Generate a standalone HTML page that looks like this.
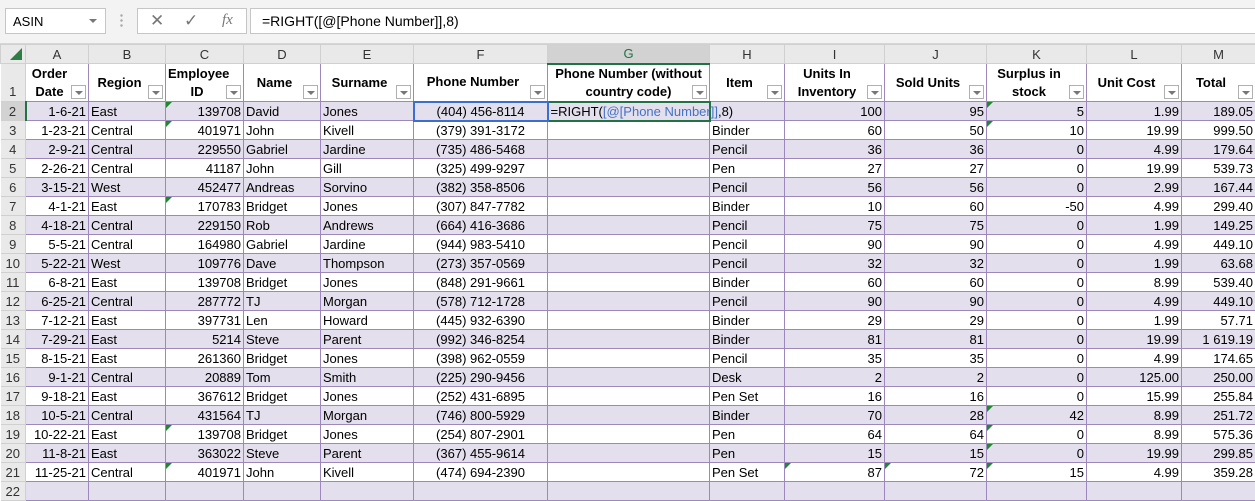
<!DOCTYPE html>
<html><head><meta charset="utf-8">
<style>
*{box-sizing:border-box;margin:0;padding:0}
body{width:1255px;height:484px;overflow:hidden;background:#fff;font-family:"Liberation Sans",sans-serif;font-size:13px;color:#000;position:relative}
#bar{position:absolute;left:0;top:0;width:1255px;height:44px;background:#f3f3f3;border-bottom:1px solid #d6d6d6}
#nb{position:absolute;left:5px;top:8px;width:101px;height:26px;background:#fff;border:1px solid #c6c6c6;font-size:13px;padding:5px 0 0 7px}
#nb:after{content:"";position:absolute;right:8px;top:10px;border-left:4px solid transparent;border-right:4px solid transparent;border-top:4px solid #777}
#dots{position:absolute;left:120px;top:13px;width:3px;height:16px;background:radial-gradient(circle,#aaa 1px,transparent 1.5px) 0 0/3px 5px}
#fb{position:absolute;left:137px;top:8px;width:110px;height:26px;background:#fff;border:1px solid #c6c6c6;color:#777}
#fi{position:absolute;left:250px;top:8px;width:1010px;height:26px;background:#fff;border:1px solid #c6c6c6;padding:4px 0 0 11px;font-size:14px}
table{position:absolute;left:0;top:44px;width:1255px;border-collapse:collapse;table-layout:fixed}
td{height:19px;border:1px solid #9c88bd;padding:0 2px;white-space:nowrap;overflow:hidden;font-weight:normal;line-height:17px}
tr.ch td{background:#e9e9e9;border-color:#d0d0d0;text-align:center;color:#333;font-size:13px}
td.rh{background:#e9e9e9;border-color:#d0d0d0;text-align:center;color:#333;border-left:none;padding:0}
tr.h td{height:38px;font-weight:bold;text-align:center;position:relative;line-height:18px;padding:0 17px 0 2px;vertical-align:middle;white-space:normal;overflow:visible}
tr.h td.rh{font-weight:normal;vertical-align:bottom;padding:0}
.f{position:absolute;right:2px;bottom:2px;width:15px;height:14px;border:1px solid #b0b0b0;background:#fff}
.f:after{content:"";position:absolute;left:3px;top:5px;border-left:4px solid transparent;border-right:4px solid transparent;border-top:4px solid #777}
tr.b td{background:#e4dfec}
tr.b td.rh,tr td.rh{background:#e9e9e9}
.r{text-align:right}.c{text-align:center}
.t{position:relative}
.t:before{content:"";position:absolute;left:0;top:0;border-top:6px solid #1e8a2e;border-right:6px solid transparent}
</style></head><body>
<div id="bar">
<div id="nb">ASIN</div>
<div id="dots"></div>
<div id="fb"><span style="position:absolute;left:12px;top:2px;font-size:17px">✕</span><span style="position:absolute;left:46px;top:2px;font-size:17px">✓</span><span style="position:absolute;left:84px;top:3px;font-style:italic;font-family:'Liberation Serif',serif;font-size:15px">fx</span></div>
<div id="fi">=RIGHT([@[Phone Number]],8)</div>
</div>
<table>
<colgroup><col style="width:25px"><col style="width:63px"><col style="width:77px"><col style="width:78px"><col style="width:77px"><col style="width:93px"><col style="width:134px"><col style="width:162px"><col style="width:75px"><col style="width:100px"><col style="width:102px"><col style="width:100px"><col style="width:95px"><col style="width:74px"></colgroup>
<tr class="ch"><td style="background:#e9e9e9;position:relative"><span style="position:absolute;right:3px;bottom:3px;border-left:12px solid transparent;border-bottom:12px solid #2e7d44"></span></td><td>A</td><td>B</td><td>C</td><td>D</td><td>E</td><td>F</td><td style="background:#d2d2d2;color:#217346;border-bottom:2px solid #217346">G</td><td>H</td><td>I</td><td>J</td><td>K</td><td>L</td><td>M</td></tr>
<tr class="h"><td class="rh">1</td><td>Order Date<span class="f"></span></td><td>Region<span class="f"></span></td><td>Employee ID<span class="f"></span></td><td>Name<span class="f"></span></td><td>Surname<span class="f"></span></td><td>Phone Number<span class="f"></span></td><td style="padding:0 2px">Phone Number (without<br>country code)<span class="f"></span></td><td>Item<span class="f"></span></td><td>Units In Inventory<span class="f"></span></td><td>Sold Units<span class="f"></span></td><td>Surplus in stock<span class="f"></span></td><td>Unit Cost<span class="f"></span></td><td>Total<span class="f"></span></td></tr>
<tr class="b"><td class="rh" style="background:#d2d2d2;border-right:2px solid #217346">2</td><td class="r">1-6-21</td><td>East</td><td class="r t">139708</td><td>David</td><td>Jones</td><td class="c" style="border:2px solid #3a6fcf">(404) 456-8114</td><td style="border:2px solid #217346;overflow:visible;position:relative;z-index:2">=RIGHT(<span style="color:#4472c4">[@[Phone Number]]</span>,8)</td><td></td><td class="r">100</td><td class="r">95</td><td class="r t">5</td><td class="r">1.99</td><td class="r">189.05</td></tr>
<tr><td class="rh">3</td><td class="r">1-23-21</td><td>Central</td><td class="r t">401971</td><td>John</td><td>Kivell</td><td class="c">(379) 391-3172</td><td></td><td>Binder</td><td class="r">60</td><td class="r">50</td><td class="r t">10</td><td class="r">19.99</td><td class="r">999.50</td></tr>
<tr class="b"><td class="rh">4</td><td class="r">2-9-21</td><td>Central</td><td class="r">229550</td><td>Gabriel</td><td>Jardine</td><td class="c">(735) 486-5468</td><td></td><td>Pencil</td><td class="r">36</td><td class="r">36</td><td class="r">0</td><td class="r">4.99</td><td class="r">179.64</td></tr>
<tr><td class="rh">5</td><td class="r">2-26-21</td><td>Central</td><td class="r">41187</td><td>John</td><td>Gill</td><td class="c">(325) 499-9297</td><td></td><td>Pen</td><td class="r">27</td><td class="r">27</td><td class="r">0</td><td class="r">19.99</td><td class="r">539.73</td></tr>
<tr class="b"><td class="rh">6</td><td class="r">3-15-21</td><td>West</td><td class="r">452477</td><td>Andreas</td><td>Sorvino</td><td class="c">(382) 358-8506</td><td></td><td>Pencil</td><td class="r">56</td><td class="r">56</td><td class="r">0</td><td class="r">2.99</td><td class="r">167.44</td></tr>
<tr><td class="rh">7</td><td class="r">4-1-21</td><td>East</td><td class="r t">170783</td><td>Bridget</td><td>Jones</td><td class="c">(307) 847-7782</td><td></td><td>Binder</td><td class="r">10</td><td class="r">60</td><td class="r">-50</td><td class="r">4.99</td><td class="r">299.40</td></tr>
<tr class="b"><td class="rh">8</td><td class="r">4-18-21</td><td>Central</td><td class="r">229150</td><td>Rob</td><td>Andrews</td><td class="c">(664) 416-3686</td><td></td><td>Pencil</td><td class="r">75</td><td class="r">75</td><td class="r">0</td><td class="r">1.99</td><td class="r">149.25</td></tr>
<tr><td class="rh">9</td><td class="r">5-5-21</td><td>Central</td><td class="r">164980</td><td>Gabriel</td><td>Jardine</td><td class="c">(944) 983-5410</td><td></td><td>Pencil</td><td class="r">90</td><td class="r">90</td><td class="r">0</td><td class="r">4.99</td><td class="r">449.10</td></tr>
<tr class="b"><td class="rh">10</td><td class="r">5-22-21</td><td>West</td><td class="r">109776</td><td>Dave</td><td>Thompson</td><td class="c">(273) 357-0569</td><td></td><td>Pencil</td><td class="r">32</td><td class="r">32</td><td class="r">0</td><td class="r">1.99</td><td class="r">63.68</td></tr>
<tr><td class="rh">11</td><td class="r">6-8-21</td><td>East</td><td class="r">139708</td><td>Bridget</td><td>Jones</td><td class="c">(848) 291-9661</td><td></td><td>Binder</td><td class="r">60</td><td class="r">60</td><td class="r">0</td><td class="r">8.99</td><td class="r">539.40</td></tr>
<tr class="b"><td class="rh">12</td><td class="r">6-25-21</td><td>Central</td><td class="r">287772</td><td>TJ</td><td>Morgan</td><td class="c">(578) 712-1728</td><td></td><td>Pencil</td><td class="r">90</td><td class="r">90</td><td class="r">0</td><td class="r">4.99</td><td class="r">449.10</td></tr>
<tr><td class="rh">13</td><td class="r">7-12-21</td><td>East</td><td class="r">397731</td><td>Len</td><td>Howard</td><td class="c">(445) 932-6390</td><td></td><td>Binder</td><td class="r">29</td><td class="r">29</td><td class="r">0</td><td class="r">1.99</td><td class="r">57.71</td></tr>
<tr class="b"><td class="rh">14</td><td class="r">7-29-21</td><td>East</td><td class="r">5214</td><td>Steve</td><td>Parent</td><td class="c">(992) 346-8254</td><td></td><td>Binder</td><td class="r">81</td><td class="r">81</td><td class="r">0</td><td class="r">19.99</td><td class="r">1 619.19</td></tr>
<tr><td class="rh">15</td><td class="r">8-15-21</td><td>East</td><td class="r">261360</td><td>Bridget</td><td>Jones</td><td class="c">(398) 962-0559</td><td></td><td>Pencil</td><td class="r">35</td><td class="r">35</td><td class="r">0</td><td class="r">4.99</td><td class="r">174.65</td></tr>
<tr class="b"><td class="rh">16</td><td class="r">9-1-21</td><td>Central</td><td class="r">20889</td><td>Tom</td><td>Smith</td><td class="c">(225) 290-9456</td><td></td><td>Desk</td><td class="r">2</td><td class="r">2</td><td class="r">0</td><td class="r">125.00</td><td class="r">250.00</td></tr>
<tr><td class="rh">17</td><td class="r">9-18-21</td><td>East</td><td class="r">367612</td><td>Bridget</td><td>Jones</td><td class="c">(252) 431-6895</td><td></td><td>Pen Set</td><td class="r">16</td><td class="r">16</td><td class="r">0</td><td class="r">15.99</td><td class="r">255.84</td></tr>
<tr class="b"><td class="rh">18</td><td class="r">10-5-21</td><td>Central</td><td class="r">431564</td><td>TJ</td><td>Morgan</td><td class="c">(746) 800-5929</td><td></td><td>Binder</td><td class="r">70</td><td class="r">28</td><td class="r t">42</td><td class="r">8.99</td><td class="r">251.72</td></tr>
<tr><td class="rh">19</td><td class="r">10-22-21</td><td>East</td><td class="r t">139708</td><td>Bridget</td><td>Jones</td><td class="c">(254) 807-2901</td><td></td><td>Pen</td><td class="r">64</td><td class="r">64</td><td class="r t">0</td><td class="r">8.99</td><td class="r">575.36</td></tr>
<tr class="b"><td class="rh">20</td><td class="r">11-8-21</td><td>East</td><td class="r">363022</td><td>Steve</td><td>Parent</td><td class="c">(367) 455-9614</td><td></td><td>Pen</td><td class="r">15</td><td class="r">15</td><td class="r t">0</td><td class="r">19.99</td><td class="r">299.85</td></tr>
<tr><td class="rh">21</td><td class="r">11-25-21</td><td>Central</td><td class="r t">401971</td><td>John</td><td>Kivell</td><td class="c">(474) 694-2390</td><td></td><td>Pen Set</td><td class="r t">87</td><td class="r t">72</td><td class="r t">15</td><td class="r">4.99</td><td class="r">359.28</td></tr>
<tr class="b"><td class="rh">22</td><td></td><td></td><td></td><td></td><td></td><td></td><td></td><td></td><td></td><td></td><td></td><td></td><td></td></tr>
</table>
</body></html>
